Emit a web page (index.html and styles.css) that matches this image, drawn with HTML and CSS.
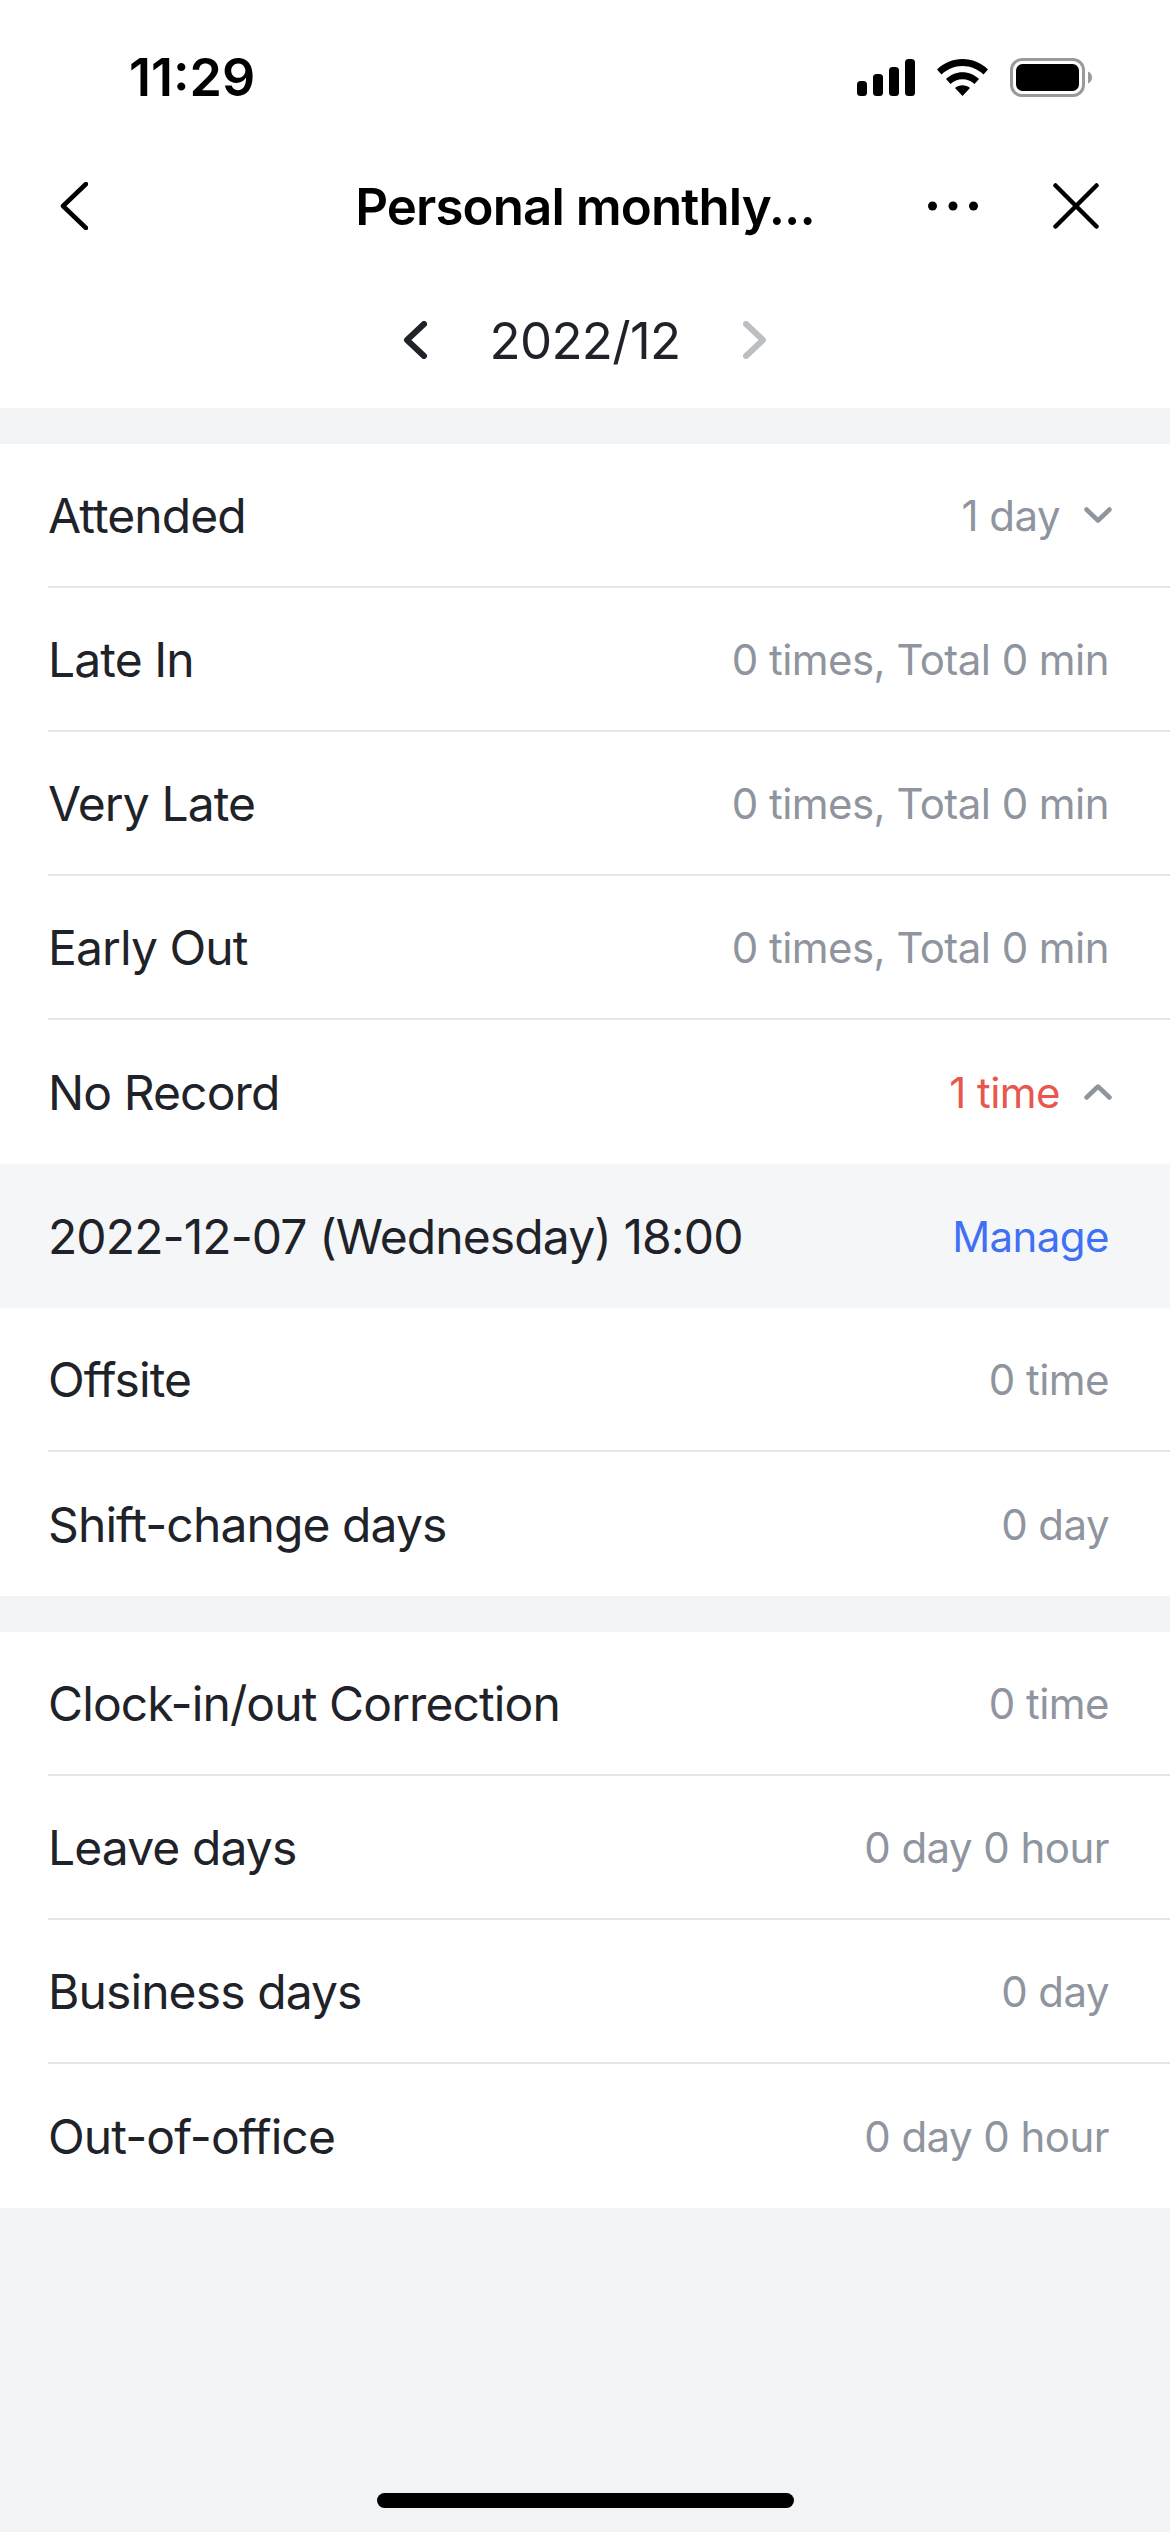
FILE: index.html
```html
<!DOCTYPE html>
<html lang="en">
<head>
  <meta charset="UTF-8">
  <meta name="viewport" content="width=device-width, initial-scale=1.0">
  <title>Personal monthly statistics</title>
  <link rel="stylesheet" href="styles.css">
</head>
<body>

  <div class="status-bar">
    <span class="status-time">11:29</span>
    <div class="status-icons">
      <svg class="icon-signal" width="58" height="37" viewBox="0 0 58 37">
        <rect x="0" y="22" width="10" height="15" rx="3.5" fill="#000"/>
        <rect x="16" y="15" width="10" height="22" rx="3.5" fill="#000"/>
        <rect x="32" y="8" width="10" height="29" rx="3.5" fill="#000"/>
        <rect x="48" y="0" width="10" height="37" rx="3.5" fill="#000"/>
      </svg>
      <svg class="icon-wifi" width="51" height="37" viewBox="0 0 51 37">
        <path d="M0 10.5C7 3.8 15.8 0 25.5 0S44 3.8 51 10.5L46.5 15.5C40.8 10.200 33.500 7 25.500 7S10.200 10.200 4.500 15.500Z" fill="#000"/>
        <path d="M9 20C13.500 15.800 19.200 13.200 25.500 13.200S37.500 15.800 42 20L37.500 25C34.300 22.200 30.100 20.300 25.500 20.300S16.700 22.200 13.500 25Z" fill="#000"/>
        <path d="M18 29C20.100 27.300 22.700 26.300 25.500 26.300S30.900 27.300 33 29L25.500 37Z" fill="#000"/>
      </svg>
      <svg class="icon-battery" width="83" height="39" viewBox="0 0 83 39">
        <rect x="1.500" y="1.500" width="72" height="36" rx="10.500" fill="none" stroke="#9a9a9a" stroke-width="3"/>
        <rect x="6" y="6" width="63" height="27" rx="6.500" fill="#000"/>
        <path d="M78 13.500C80.500 14.500 82 16.800 82 19.500S80.500 24.500 78 25.500Z" fill="#9a9a9a"/>
      </svg>
    </div>
  </div>

  <div class="nav-bar">
    <svg class="nav-back" width="28" height="48" viewBox="0 0 28 48">
      <path d="M26 2L3 24L26 46" fill="none" stroke="#000" stroke-width="4.500" stroke-linecap="round" stroke-linejoin="round"/>
    </svg>
    <div class="nav-title">Personal monthly...</div>
    <div class="nav-actions">
      <svg width="50" height="10" viewBox="0 0 50 10">
        <circle cx="4.500" cy="5" r="4.500" fill="#000"/>
        <circle cx="25" cy="5" r="4.500" fill="#000"/>
        <circle cx="45.500" cy="5" r="4.500" fill="#000"/>
      </svg>
      <svg width="46" height="46" viewBox="0 0 46 46">
        <path d="M2.500 2.500L43.500 43.500M43.500 2.500L2.500 43.500" fill="none" stroke="#000" stroke-width="4.500" stroke-linecap="round"/>
      </svg>
    </div>
  </div>

  <div class="month-bar">
    <svg width="24" height="38" viewBox="0 0 24 38">
      <path d="M21 3L4 19L21 35" fill="none" stroke="#1f2329" stroke-width="6" stroke-linecap="round" stroke-linejoin="round"/>
    </svg>
    <span class="month-label">2022/12</span>
    <svg width="24" height="38" viewBox="0 0 24 38">
      <path d="M3 3L20 19L3 35" fill="none" stroke="#bbbfc4" stroke-width="6" stroke-linecap="round" stroke-linejoin="round"/>
    </svg>
  </div>

  <div class="section first">
    <div class="row">
      <span class="row-label">Attended</span>
      <span class="row-value">1 day
        <svg class="row-arrow" width="28" height="16" viewBox="0 0 28 16"><path d="M2.500 2.500L14 13.500L25.500 2.500" fill="none" stroke="#8f959e" stroke-width="4.500" stroke-linecap="round" stroke-linejoin="round"/></svg>
      </span>
    </div>
    <div class="row">
      <span class="row-label">Late In</span>
      <span class="row-value">0 times, Total 0 min</span>
    </div>
    <div class="row">
      <span class="row-label">Very Late</span>
      <span class="row-value">0 times, Total 0 min</span>
    </div>
    <div class="row">
      <span class="row-label">Early Out</span>
      <span class="row-value">0 times, Total 0 min</span>
    </div>
    <div class="row no-line">
      <span class="row-label">No Record</span>
      <span class="row-value red">1 time
        <svg class="row-arrow" width="28" height="16" viewBox="0 0 28 16"><path d="M2.500 13.500L14 2.500L25.500 13.500" fill="none" stroke="#8f959e" stroke-width="4.500" stroke-linecap="round" stroke-linejoin="round"/></svg>
      </span>
    </div>
    <div class="detail-row">
      <span class="row-label">2022-12-07 (Wednesday) 18:00</span>
      <span class="manage-link">Manage</span>
    </div>
    <div class="row">
      <span class="row-label">Offsite</span>
      <span class="row-value">0 time</span>
    </div>
    <div class="row no-line">
      <span class="row-label">Shift-change days</span>
      <span class="row-value">0 day</span>
    </div>
  </div>

  <div class="section">
    <div class="row">
      <span class="row-label">Clock-in/out Correction</span>
      <span class="row-value">0 time</span>
    </div>
    <div class="row">
      <span class="row-label">Leave days</span>
      <span class="row-value">0 day 0 hour</span>
    </div>
    <div class="row">
      <span class="row-label">Business days</span>
      <span class="row-value">0 day</span>
    </div>
    <div class="row no-line">
      <span class="row-label">Out-of-office</span>
      <span class="row-value">0 day 0 hour</span>
    </div>
  </div>

  <div class="home-indicator"></div>

</body>
</html>
```

FILE: styles.css
```css
body {
  font-family: Inter, "Liberation Sans", sans-serif;
  margin: 0;
  padding: 0;
  height: 2532px;
  background-color: #f2f3f5;
  color: #1f2329;
  display: flex;
  flex-direction: column;
  overflow: hidden;
}
.status-bar {
  background-color: white;
  height: 150px;
  padding: 4px 77px 0 129px;
  display: flex;
  justify-content: space-between;
  align-items: center;
  box-sizing: border-box;
  flex-shrink: 0;
}
.status-time {
  font-size: 52px;
  font-weight: 600;
  color: black;
}
.status-icons {
  display: flex;
  align-items: center;
  gap: 22px;
}
.nav-bar {
  background-color: white;
  height: 112px;
  padding: 0 60px;
  display: grid;
  grid-template-columns: 1fr auto 1fr;
  align-items: center;
  flex-shrink: 0;
}
.nav-title {
  font-size: 51px;
  font-weight: 600;
  color: black;
  letter-spacing: -0.9px;
}
.nav-actions {
  display: flex;
  justify-content: flex-end;
  align-items: center;
  gap: 75px;
  padding-right: 11px;
}
.month-bar {
  background-color: white;
  height: 146px;
  padding-top: 10px;
  box-sizing: border-box;
  display: flex;
  justify-content: center;
  align-items: center;
  gap: 63px;
  flex-shrink: 0;
}
.month-label {
  font-size: 51px;
  letter-spacing: -0.7px;
}
.section {
  background-color: white;
  margin-bottom: 36px;
}
.section.first {
  margin-top: 36px;
}
.row {
  height: 144px;
  box-sizing: border-box;
  margin-left: 48px;
  padding-right: 61px;
  border-bottom: 2px solid #e4e5e7;
  display: flex;
  justify-content: space-between;
  align-items: center;
}
.row.no-line {
  border-bottom: none;
}
.row-label {
  font-size: 48px;
  letter-spacing: -0.9px;
}
.row-value {
  font-size: 42px;
  letter-spacing: -0.55px;
  color: #8f959e;
  display: flex;
  align-items: center;
  gap: 24px;
}
.row-value.red {
  color: #e8574d;
}
.row-arrow {
  margin-right: -3px;
}
.detail-row {
  height: 144px;
  box-sizing: border-box;
  background-color: #f5f6f8;
  padding: 0 61px 0 48px;
  display: flex;
  justify-content: space-between;
  align-items: center;
}
.manage-link {
  font-size: 42px;
  letter-spacing: -0.55px;
  color: #4070f4;
}
.home-indicator {
  width: 417px;
  height: 15px;
  border-radius: 8px;
  background-color: black;
  margin: auto auto 24px;
}
```
